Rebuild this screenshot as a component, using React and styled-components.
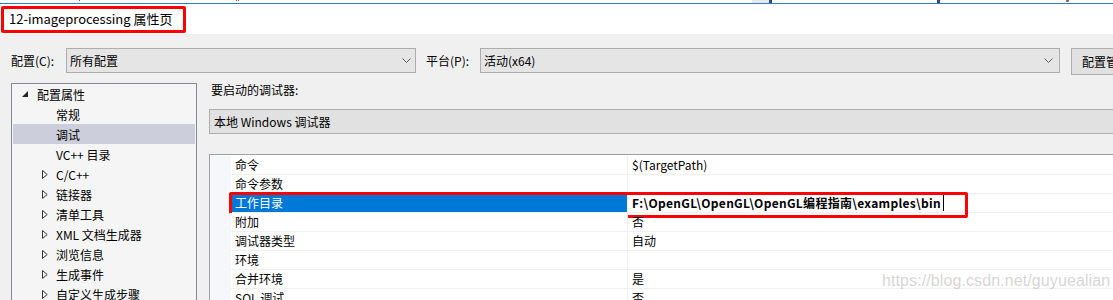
import React from "react";
import styled, { createGlobalStyle } from "styled-components";

const GlobalStyle = createGlobalStyle`
  html, body { margin: 0; padding: 0; background: #f0f0f0; }
  body {
    font-family: "Noto Sans CJK SC", "Noto Sans", sans-serif;
    font-size: 12px;
    color: #000;
  }
  * { box-sizing: border-box; }
`;

const Page = styled.div`
  position: relative;
  width: 1113px;
  height: 300px;
  overflow: hidden;
  background: #f0f0f0;
`;

const TopStrip = styled.div`
  display: flex;
  height: 3px;
  background: #fff;
`;

const Spacer = styled.div`
  flex: none;
  width: ${(p) => p.$w}px;
`;

const Mark = styled.div`
  flex: none;
  width: ${(p) => p.$w}px;
  height: ${(p) => p.$h || 3}px;
  background: ${(p) => p.$c};
`;

const BlueLine = styled.div`
  height: 1px;
  background: #3478c6;
`;

const TitleBar = styled.div`
  height: 30px;
  background: #fff;
  padding: 2px 0 0 1px;
`;

const TitleBox = styled.div`
  width: 185px;
  height: 27px;
  border: 3px solid #ff0000;
  border-radius: 2px;
  padding-left: 5px;
  font-size: 13px;
  line-height: 20px;
  white-space: nowrap;
`;

const ConfigRow = styled.div`
  display: flex;
  align-items: flex-start;
  padding: 14px 0 0 11px;
  height: 41px;
`;

const FieldLabel = styled.div`
  flex: none;
  width: ${(p) => p.$w}px;
  line-height: 25px;
  white-space: nowrap;
`;

const Combo = styled.div`
  flex: none;
  display: flex;
  align-items: center;
  width: ${(p) => p.$w}px;
  height: 25px;
  border: 1px solid #adadad;
  background: #e5e5e5;
  padding: 0 ${(p) => p.$pr || 4}px 0 3px;
  margin-right: ${(p) => p.$mr || 0}px;
`;

const ComboText = styled.span`
  flex: 1;
  white-space: nowrap;
`;

const Button = styled.div`
  flex: none;
  width: 110px;
  height: 27px;
  border: 1px solid #adadad;
  background: #e1e1e1;
  padding-left: 10px;
  line-height: 25px;
  white-space: nowrap;
`;

const Main = styled.div`
  display: flex;
  align-items: flex-start;
  padding-left: 11px;
  margin-top: 8px;
`;

const Tree = styled.div`
  flex: none;
  width: 186px;
  height: 240px;
  border: 1px solid #828790;
  border-bottom: none;
  padding: 0 1px 1px;
  background: #f5f5f5;
`;

const TreeRow = styled.div`
  display: flex;
  align-items: center;
  height: 20px;
  padding-left: ${(p) => p.$indent}px;
  background: ${(p) => (p.$selected ? "#cccedb" : "transparent")};
  white-space: nowrap;
`;

const Expander = styled.span`
  flex: none;
  display: flex;
  align-items: center;
  width: ${(p) => p.$w}px;
  height: 20px;
`;

const RightPane = styled.div`
  flex: none;
  width: 1000px;
  margin-left: 12px;
`;

const SectionLabel = styled.div`
  line-height: 14px;
  padding-left: 2px;
  white-space: nowrap;
`;

const DebuggerBox = styled.div`
  margin-top: 12px;
  height: 25px;
  border: 1px solid #adadad;
  background: #e1e1e1;
  padding-left: 4px;
  line-height: 23px;
  white-space: nowrap;
`;

const Grid = styled.div`
  margin-top: 20px;
  border-top: 1px solid #a0a0a0;
  border-left: 1px solid #a0a0a0;
  background: #fff;
  padding-top: 1px;
  height: 200px;
`;

const GridRow = styled.div`
  position: relative;
  display: grid;
  grid-template-columns: 21px 396px 1fr;
  height: 19px;
`;

const Gutter = styled.div`
  background: #f5f7fb;
`;

const NameCell = styled.div`
  padding-left: 4px;
  line-height: 18px;
  border-bottom: 1px solid #f0f0f0;
  background: ${(p) => (p.$selected ? "#0078d7" : "#fff")};
  color: ${(p) => (p.$selected ? "#fff" : "#000")};
  white-space: nowrap;
`;

const ValueCell = styled.div`
  padding-left: 4px;
  line-height: 18px;
  border-left: 1px solid #f0f0f0;
  border-bottom: 1px solid #f0f0f0;
  font-weight: ${(p) => (p.$bold ? 700 : 400)};
  letter-spacing: ${(p) => (p.$bold ? "0.3px" : "0")};
  white-space: nowrap;
  display: flex;
  align-items: center;
`;

const Caret = styled.span`
  display: inline-block;
  width: 1px;
  height: 16px;
  background: #000;
  margin-left: 2px;
`;

const Annotation = styled.div`
  position: absolute;
  left: 19px;
  top: -2px;
  width: 739px;
  height: 26px;
  border: 3px solid #ff0000;
  border-radius: 2px;
  pointer-events: none;
`;

const Watermark = styled.div`
  position: absolute;
  left: 882px;
  top: 272px;
  font-family: "Liberation Sans", Arial, sans-serif;
  font-size: 16px;
  color: rgba(185, 185, 185, 0.6);
  white-space: nowrap;
  letter-spacing: 0.1px;
`;

const Chevron = () => (
  <svg width="9" height="5" viewBox="0 0 9 5">
    <polyline points="0.5,0.5 4.5,4.5 8.5,0.5" fill="none" stroke="#606060" strokeWidth="1" />
  </svg>
);

const ExpandedIcon = () => (
  <svg width="6" height="6" viewBox="0 0 6 6">
    <polygon points="6,0 6,6 0,6" fill="#262626" />
  </svg>
);

const CollapsedIcon = () => (
  <svg width="6" height="9" viewBox="0 0 6 9">
    <polygon points="0.5,0.5 5.2,4.5 0.5,8.5" fill="none" stroke="#333" strokeWidth="1" />
  </svg>
);

const treeItems = [
  { label: "配置属性", level: 0, exp: "open" },
  { label: "常规", level: 1 },
  { label: "调试", level: 1, selected: true },
  { label: "VC++ 目录", level: 1 },
  { label: "C/C++", level: 1, exp: "closed" },
  { label: "链接器", level: 1, exp: "closed" },
  { label: "清单工具", level: 1, exp: "closed" },
  { label: "XML 文档生成器", level: 1, exp: "closed" },
  { label: "浏览信息", level: 1, exp: "closed" },
  { label: "生成事件", level: 1, exp: "closed" },
  { label: "自定义生成步骤", level: 1, exp: "closed" },
];

const props = [
  { name: "命令", value: "$(TargetPath)" },
  { name: "命令参数", value: "" },
  { name: "工作目录", value: "F:\\OpenGL\\OpenGL\\OpenGL编程指南\\examples\\bin", selected: true },
  { name: "附加", value: "否" },
  { name: "调试器类型", value: "自动" },
  { name: "环境", value: "" },
  { name: "合并环境", value: "是" },
  { name: "SQL 调试", value: "否" },
];

export default function App() {
  return (
    <Page>
      <GlobalStyle />
      <TopStrip>
        <Spacer $w={79} />
        <Mark $w={1} $h={1} $c="#c04040" />
        <Spacer $w={156} />
        <Mark $w={1} $h={1} $c="#c04040" />
        <Spacer $w={1} />
        <Mark $w={1} $h={1} $c="#c04040" />
        <Spacer $w={513} />
        <Mark $w={17} $c="#e6e8ee" />
        <Mark $w={3} $c="#2f4a78" />
        <Spacer $w={165} />
        <Mark $w={3} $c="#2f4a78" />
        <Spacer $w={126} />
        <Mark $w={3} $h={2} $c="#8a7060" />
      </TopStrip>
      <BlueLine />
      <TitleBar>
        <TitleBox>12-imageprocessing 属性页</TitleBox>
      </TitleBar>

      <ConfigRow>
        <FieldLabel $w={55}>配置(C):</FieldLabel>
        <Combo $w={350} $pr={4} $mr={10}>
          <ComboText>所有配置</ComboText>
          <Chevron />
        </Combo>
        <FieldLabel $w={54}>平台(P):</FieldLabel>
        <Combo $w={580} $pr={6} $mr={11}>
          <ComboText>活动(x64)</ComboText>
          <Chevron />
        </Combo>
        <Button>配置管理器(O)...</Button>
      </ConfigRow>

      <Main>
        <Tree>
          {treeItems.map((it) => (
            <TreeRow key={it.label} $indent={it.level === 0 ? 9 : 29} $selected={it.selected}>
              <Expander $w={it.level === 0 ? 15 : 14}>
                {it.exp === "open" && <ExpandedIcon />}
                {it.exp === "closed" && <CollapsedIcon />}
              </Expander>
              {it.label}
            </TreeRow>
          ))}
        </Tree>

        <RightPane>
          <SectionLabel>要启动的调试器:</SectionLabel>
          <DebuggerBox>本地 Windows 调试器</DebuggerBox>
          <Grid>
            {props.map((p, i) => (
              <GridRow key={i}>
                <Gutter />
                <NameCell $selected={p.selected}>{p.name}</NameCell>
                <ValueCell $bold={p.selected}>
                  {p.value}
                  {p.selected && <Caret />}
                </ValueCell>
                {p.selected && <Annotation />}
              </GridRow>
            ))}
          </Grid>
        </RightPane>
      </Main>

      <Watermark>https://blog.csdn.net/guyuealian</Watermark>
    </Page>
  );
}
